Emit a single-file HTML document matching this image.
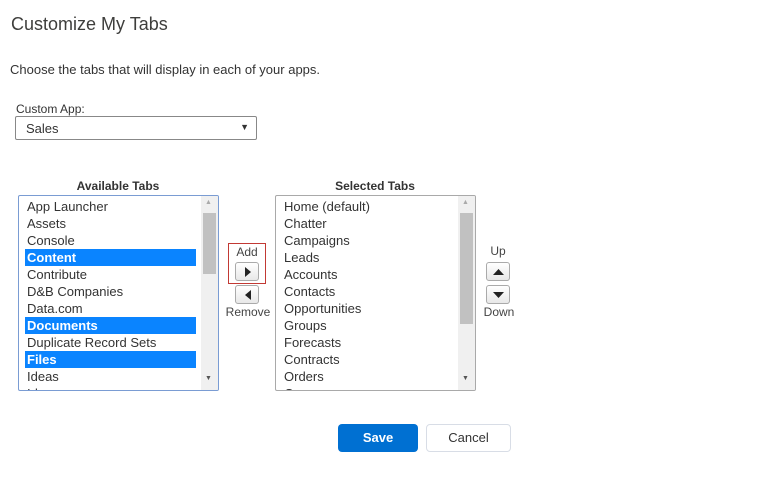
<!DOCTYPE html>
<html><head><style>
*{margin:0;padding:0;box-sizing:border-box}
body{width:758px;height:480px;background:#fff;font-family:"Liberation Sans",Arial,sans-serif;color:#333;position:relative;overflow:hidden}
.a{position:absolute}
.lb{position:absolute;border:1px solid #a9a9a9;border-radius:2px;overflow:hidden;background:#fff}
.it{position:absolute;left:8px;font-size:13px;line-height:17px;height:17px;white-space:nowrap;color:#333}
.sel{background:#0a84ff;color:#fff;font-weight:bold;left:6px;width:171px;padding-left:2px}
.sb{position:absolute;right:0;top:0;width:17px;height:100%;background:#f0f0f0}
.th{position:absolute;left:2px;width:13px;background:#c1c1c1}
.btn{position:absolute;width:24px;height:19px;border:1px solid #aaa;border-radius:3px;background:linear-gradient(#fff,#e8e8e8)}
.lbl{position:absolute;font-size:12px;color:#444;text-align:center}
</style></head><body>
<div class="a" style="left:11px;top:14px;font-size:18px;color:#3e3e3c">Customize My Tabs</div>
<div class="a" style="left:10px;top:62px;font-size:13px;color:#333">Choose the tabs that will display in each of your apps.</div>
<div class="a" style="left:16px;top:102px;font-size:12px;color:#333">Custom App:</div>
<div class="a" style="left:15px;top:116px;width:242px;height:24px;border:1px solid #888;border-radius:2px;font-size:13px;padding:4px 0 0 10px;color:#333">Sales<span class="a" style="right:7px;top:5px;font-size:9px">▼</span></div>

<div class="a" style="left:18px;top:179px;width:200px;text-align:center;font-size:12px;font-weight:bold;color:#333">Available Tabs</div>
<div class="lb" style="left:18px;top:195px;width:201px;height:196px;border-color:#7a9cd3">
<div class="it" style="top:2px">App Launcher</div>
<div class="it" style="top:19px">Assets</div>
<div class="it" style="top:36px">Console</div>
<div class="it sel" style="top:53px">Content</div>
<div class="it" style="top:70px">Contribute</div>
<div class="it" style="top:87px">D&amp;B Companies</div>
<div class="it" style="top:104px">Data.com</div>
<div class="it sel" style="top:121px">Documents</div>
<div class="it" style="top:138px">Duplicate Record Sets</div>
<div class="it sel" style="top:155px">Files</div>
<div class="it" style="top:172px">Ideas</div>
<div class="it" style="top:189px">Ideas</div>
<div class="sb"><div class="a" style="left:4px;top:3px;font-size:7px;color:#aaa">▲</div><div class="th" style="top:17px;height:61px"></div><div class="a" style="left:4px;top:179px;font-size:7px;color:#555">▼</div></div>
</div>

<div class="a" style="left:228px;top:243px;width:38px;height:41px;border:1px solid #c23934"></div>
<div class="lbl" style="left:228px;top:245px;width:38px">Add</div>
<div class="btn" style="left:235px;top:262px"><svg class="a" style="left:8px;top:4px" width="8" height="10"><path d="M1 0L7 5L1 10Z" fill="#222"/></svg></div>
<div class="btn" style="left:235px;top:285px"><svg class="a" style="left:8px;top:4px" width="8" height="10"><path d="M7 0L1 5L7 10Z" fill="#222"/></svg></div>
<div class="lbl" style="left:222px;top:305px;width:52px">Remove</div>

<div class="a" style="left:275px;top:179px;width:200px;text-align:center;font-size:12px;font-weight:bold;color:#333">Selected Tabs</div>
<div class="lb" style="left:275px;top:195px;width:201px;height:196px">
<div class="it" style="top:2px">Home (default)</div>
<div class="it" style="top:19px">Chatter</div>
<div class="it" style="top:36px">Campaigns</div>
<div class="it" style="top:53px">Leads</div>
<div class="it" style="top:70px">Accounts</div>
<div class="it" style="top:87px">Contacts</div>
<div class="it" style="top:104px">Opportunities</div>
<div class="it" style="top:121px">Groups</div>
<div class="it" style="top:138px">Forecasts</div>
<div class="it" style="top:155px">Contracts</div>
<div class="it" style="top:172px">Orders</div>
<div class="it" style="top:189px">Cases</div>
<div class="sb"><div class="a" style="left:4px;top:3px;font-size:7px;color:#aaa">▲</div><div class="th" style="top:17px;height:111px"></div><div class="a" style="left:4px;top:179px;font-size:7px;color:#555">▼</div></div>
</div>

<div class="lbl" style="left:484px;top:244px;width:28px">Up</div>
<div class="btn" style="left:486px;top:262px"><svg class="a" style="left:6px;top:6px" width="11" height="7"><path d="M0 6L5.5 0L11 6Z" fill="#222"/></svg></div>
<div class="btn" style="left:486px;top:285px"><svg class="a" style="left:6px;top:6px" width="11" height="7"><path d="M0 0L5.5 6L11 0Z" fill="#222"/></svg></div>
<div class="lbl" style="left:480px;top:305px;width:38px">Down</div>

<div class="a" style="left:338px;top:424px;width:80px;height:28px;background:#0070d2;border-radius:4px;color:#fff;font-size:13px;font-weight:bold;text-align:center;line-height:28px">Save</div>
<div class="a" style="left:426px;top:424px;width:85px;height:28px;background:#fff;border:1px solid #d8dde6;border-radius:4px;color:#333;font-size:13px;text-align:center;line-height:26px">Cancel</div>
</body></html>
